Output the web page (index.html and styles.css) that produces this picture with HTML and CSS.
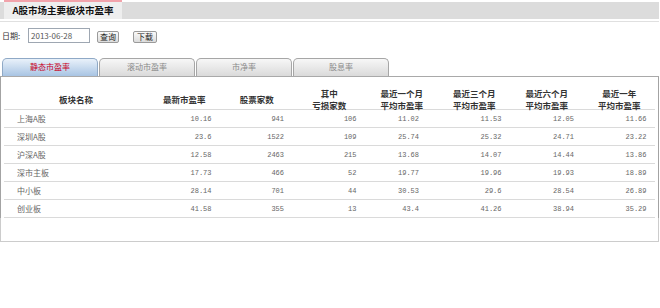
FILE: index.html
```
<!DOCTYPE html>
<html lang="zh-CN">
<head>
<meta charset="utf-8">
<title>A股市场主要板块市盈率</title>
<link rel="stylesheet" href="styles.css">
</head>
<body>
<div class="titlebar"><div class="title-tab">A股市场主要板块市盈率</div></div>
<div class="rule"></div>
<div class="datebar">
  <span class="date-label">日期:</span>
  <input class="date-input" type="text" value="2013-06-28">
  <span class="btn btn-query">查询</span>
  <span class="btn btn-down">下载</span>
</div>
<div class="tabs">
  <div class="tab active">静态市盈率</div>
  <div class="tab">滚动市盈率</div>
  <div class="tab">市净率</div>
  <div class="tab">股息率</div>
</div>
<div class="panel">
  <div class="grid">
    <div class="row head">
      <div>板块名称</div>
      <div>最新市盈率</div>
      <div>股票家数</div>
      <div>其中<br>亏损家数</div>
      <div>最近一个月<br>平均市盈率</div>
      <div>最近三个月<br>平均市盈率</div>
      <div>最近六个月<br>平均市盈率</div>
      <div>最近一年<br>平均市盈率</div>
    </div>
    <div class="row"><div class="name">上海A股</div><div class="num">10.16</div><div class="num">941</div><div class="num">106</div><div class="num">11.02</div><div class="num">11.53</div><div class="num">12.05</div><div class="num">11.66</div></div>
    <div class="row"><div class="name">深圳A股</div><div class="num">23.6</div><div class="num">1522</div><div class="num">109</div><div class="num">25.74</div><div class="num">25.32</div><div class="num">24.71</div><div class="num">23.22</div></div>
    <div class="row"><div class="name">沪深A股</div><div class="num">12.58</div><div class="num">2463</div><div class="num">215</div><div class="num">13.68</div><div class="num">14.07</div><div class="num">14.44</div><div class="num">13.86</div></div>
    <div class="row"><div class="name">深市主板</div><div class="num">17.73</div><div class="num">466</div><div class="num">52</div><div class="num">19.77</div><div class="num">19.96</div><div class="num">19.93</div><div class="num">18.89</div></div>
    <div class="row"><div class="name">中小板</div><div class="num">28.14</div><div class="num">701</div><div class="num">44</div><div class="num">30.53</div><div class="num">29.6</div><div class="num">28.54</div><div class="num">26.89</div></div>
    <div class="row"><div class="name">创业板</div><div class="num">41.58</div><div class="num">355</div><div class="num">13</div><div class="num">43.4</div><div class="num">41.26</div><div class="num">38.94</div><div class="num">35.29</div></div>
  </div>
  <div class="foot"></div>
</div>
</body>
</html>
```
FILE: styles.css
```
* { box-sizing: border-box; margin: 0; padding: 0; }
body {
  margin: 0;
  width: 659px;
  background: #fff;
  font-family: "Noto Sans CJK SC", "Noto Sans", sans-serif;
  font-size: 8px;
  color: #333;
}
.titlebar {
  display: flex;
  height: 19px;
  background: linear-gradient(#fff 0, #fff 2px, #dcdcdc 2px);
}
.title-tab {
  margin-left: 4px;
  width: 118px;
  border-top: 2px solid #f2a3ab;
  background: #eeeeee;
  font-weight: bold;
  font-size: 9.5px;
  line-height: 16px;
  text-align: center;
  color: #111;
}
.rule {
  height: 1px;
  margin-top: 2px;
  background: #e0e0e0;
}
.datebar {
  display: flex;
  align-items: flex-end;
  height: 15px;
  margin-top: 6px;
  padding-left: 2px;
}
.date-label {
  width: 26px;
  line-height: 15px;
  color: #333;
}
.date-input {
  width: 62px;
  height: 15px;
  border: 1px solid #9ea7b2;
  padding: 0 2px;
  font-family: "Noto Sans CJK SC", sans-serif;
  font-size: 8px;
  color: #555;
  outline: none;
}
.btn {
  height: 12px;
  border: 1px solid #9a9a9a;
  border-radius: 2px;
  background: linear-gradient(#fafafa, #dcdcdc);
  font-size: 8px;
  line-height: 10px;
  text-align: center;
  color: #222;
}
.btn-query { width: 22px; margin-left: 7px; }
.btn-down { width: 24px; margin-left: 14px; }
.tabs {
  display: flex;
  gap: 1px;
  height: 18px;
  margin-top: 15px;
  padding-left: 2px;
}
.tab {
  width: 96px;
  height: 18px;
  border: 1px solid #a6a6a6;
  border-bottom: none;
  border-radius: 5px 5px 0 0;
  background: linear-gradient(#f7f7f7, #dadada);
  color: #8a8a8a;
  text-align: center;
  line-height: 16px;
  font-size: 8px;
}
.tab.active {
  border-color: #8fa9c6;
  background: linear-gradient(#e9f1fa, #a8c4e3);
  color: #c8001e;
}
.panel {
  border-top: 1px solid #a9a9a9;
}
.grid {
  border-left: 1px solid #a3a3a3;
  border-right: 1px solid #a3a3a3;
  padding: 0 3px;
}
.row {
  display: grid;
  grid-template-columns: 144px repeat(7, 72.5px);
  align-items: center;
  height: 18px;
  border-bottom: 1px solid #dadada;
}
.row.head {
  height: 33px;
  padding-top: 10px;
  text-align: center;
  font-weight: bold;
  font-size: 8.5px;
  line-height: 12px;
  color: #333;
}
.name {
  padding-left: 13px;
  color: #666;
  font-size: 8px;
}
.num {
  text-align: right;
  padding-right: 9px;
  font-family: "Liberation Mono", monospace;
  font-size: 7px;
  color: #666;
}
.row > .num:nth-child(5) { padding-right: 19px; }
.foot {
  height: 24px;
  border: 1px solid #cccccc;
  border-top: none;
}
```
